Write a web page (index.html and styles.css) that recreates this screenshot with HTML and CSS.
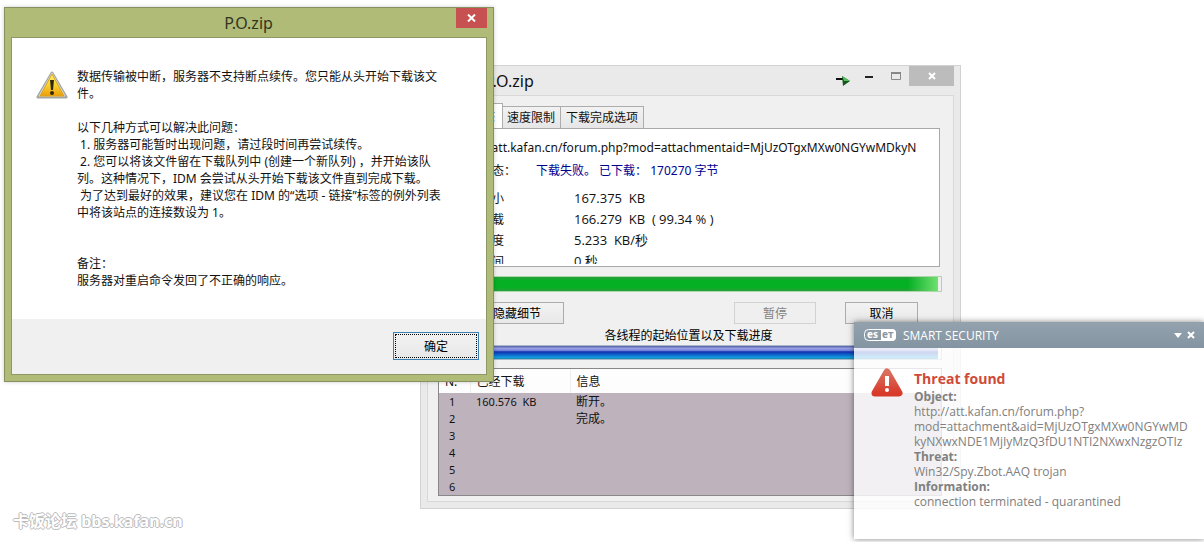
FILE: index.html
```html
<!DOCTYPE html>
<html lang="zh-CN">
<head>
  <meta charset="UTF-8" />
  <meta name="viewport" content="width=device-width, initial-scale=1.0"/>
  <title>P.O.zip</title>
  <link rel="stylesheet" href="styles.css">
</head>
<body>

  <main class="desktop">

    <!-- Download window -->
    <section class="window">
      <header class="window-bar">
        <h1>P.O.zip</h1>
        <div class="window-controls">
          <svg class="arrow" width="14" height="10" viewBox="0 0 14 10"><path d="M0 2h7v2H0z" fill="#111"/><path d="M6 0l8 5-7 5z" fill="#14561c"/><path d="M6 0l8 5H8z" fill="#4fbf5a"/></svg>
          <button class="control" aria-label="最小化"><svg width="8" height="3"><path d="M0 1h8v2H0z" fill="#222"/></svg></button>
          <button class="control" aria-label="最大化"><svg width="10" height="8"><path d="M.5 1h9v6.500h-9z" fill="none" stroke="#888"/><path d="M0 0h10v2H0z" fill="#888"/></svg></button>
          <button class="control control-close" aria-label="关闭"><svg width="8" height="8" viewBox="0 0 8 8"><path d="M1 1l6 6M7 1L1 7" stroke="#fff" stroke-width="2"/></svg></button>
        </div>
      </header>

      <div class="client">
        <nav class="tabs">
          <button class="tab active">下载状态</button>
          <button class="tab">速度限制</button>
          <button class="tab">下载完成选项</button>
        </nav>

        <div class="panel">
          <p class="url">http://att.kafan.cn/forum.php?mod=attachmentaid=MjUzOTgxMXw0NGYwMDkyN</p>
          <p class="status"><span>状　　态：</span><span class="status-text">下载失败。 已下载： 170270 字节</span></p>
          <dl class="details">
            <dt>文件大小</dt><dd>167.375&nbsp; KB</dd>
            <dt>已经下载</dt><dd>166.279&nbsp; KB&nbsp; ( 99.34 % )</dd>
            <dt>传输速度</dt><dd>5.233&nbsp; KB/秒</dd>
            <dt>剩余时间</dt><dd>0 秒</dd>
          </dl>
        </div>

        <div class="progress"><div class="progress-fill"></div></div>

        <div class="actions">
          <button class="btn btn-details">隐藏细节</button>
          <button class="btn btn-pause" disabled>暂停</button>
          <button class="btn btn-cancel">取消</button>
        </div>

        <p class="caption">各线程的起始位置以及下载进度</p>
        <div class="segments"><div class="segments-fill"></div></div>

        <div class="list">
          <table>
            <thead>
              <tr><th class="col-n">N.</th><th class="col-size">已经下载</th><th>信息</th></tr>
            </thead>
            <tbody>
              <tr><td>1</td><td>160.576&nbsp; KB</td><td>断开。</td></tr>
              <tr><td>2</td><td></td><td>完成。</td></tr>
              <tr><td>3</td><td></td><td></td></tr>
              <tr><td>4</td><td></td><td></td></tr>
              <tr><td>5</td><td></td><td></td></tr>
              <tr><td>6</td><td></td><td></td></tr>
            </tbody>
          </table>
        </div>
      </div>
    </section>

    <!-- Error dialog -->
    <section class="dialog" role="dialog" aria-labelledby="dialog-title">
      <header class="dialog-bar">
        <h2 id="dialog-title">P.O.zip</h2>
        <button class="dialog-close" aria-label="关闭"><svg width="9" height="8" viewBox="0 0 9 8"><path d="M1 .5l7 7M8 .5l-7 7" stroke="#fff" stroke-width="2"/></svg></button>
      </header>
      <div class="dialog-body">
        <div class="dialog-content">
          <svg class="warning" width="32" height="30" viewBox="0 0 32 30">
            <defs>
              <linearGradient id="yellow" x1="0" y1="0" x2="0" y2="1">
                <stop offset="0" stop-color="#fff27a"/>
                <stop offset=".55" stop-color="#f6cf2c"/>
                <stop offset="1" stop-color="#ee9d08"/>
              </linearGradient>
            </defs>
            <path d="M16 3L30 27H2z" fill="#a5a5a0" stroke="#a5a5a0" stroke-width="3" stroke-linejoin="round"/>
            <path d="M16 3L29 26H3z" fill="#ddd" stroke="#ddd" stroke-width="1" stroke-linejoin="round"/>
            <path d="M16 4L28 26H4z" fill="url(#yellow)" stroke="#d9a41a" stroke-width="1" stroke-linejoin="round"/>
            <path d="M14 10h4l-1 10h-2z" fill="#332708"/>
            <circle cx="16" cy="23" r="2" fill="#332708"/>
          </svg>
          <p class="message">数据传输被中断，服务器不支持断点续传。您只能从头开始下载该文
件。

以下几种方式可以解决此问题：
 1. 服务器可能暂时出现问题，请过段时间再尝试续传。
 2. 您可以将该文件留在下载队列中 (创建一个新队列) ，并开始该队
列。这种情况下，IDM 会尝试从头开始下载该文件直到完成下载。
 为了达到最好的效果，建议您在 IDM 的“选项 - 链接”标签的例外列表
中将该站点的连接数设为 1。


备注：
服务器对重启命令发回了不正确的响应。</p>
        </div>
        <footer class="dialog-footer">
          <button class="btn btn-ok">确定</button>
        </footer>
      </div>
    </section>

    <!-- Antivirus notification -->
    <aside class="toast" lang="en">
      <header class="toast-bar">
        <svg class="eset" width="32" height="12" viewBox="0 0 32 12">
          <rect x=".5" y=".5" width="31" height="11" rx="4" fill="none" stroke="#fff"/>
          <path d="M17 0h11a4 4 0 0 1 4 4v4a4 4 0 0 1-4 4H17z" fill="#fff"/>
          <text x="3" y="9" class="eset-left">es</text>
          <text x="18" y="9" class="eset-right">eт</text>
        </svg>
        <span class="toast-name">SMART SECURITY</span>
        <button class="toast-btn" aria-label="Options"><svg width="8" height="5"><path d="M0 0h8L4 5z" fill="#fff"/></svg></button>
        <button class="toast-btn" aria-label="Close"><svg width="8" height="8" viewBox="0 0 8 8"><path d="M1 1l6 6M7 1L1 7" stroke="#fff" stroke-width="2"/></svg></button>
      </header>
      <div class="toast-body">
        <svg class="threat" width="32" height="30" viewBox="0 0 32 30">
          <defs>
            <linearGradient id="red" x1="0" y1="0" x2="0" y2="1">
              <stop offset="0" stop-color="#d9705f"/>
              <stop offset="1" stop-color="#d83a29"/>
            </linearGradient>
          </defs>
          <path d="M16 4L28 25H4z" fill="url(#red)" stroke="url(#red)" stroke-width="7" stroke-linejoin="round"/>
          <path d="M14 8h4v10h-4z" fill="#fff"/>
          <circle cx="16" cy="22" r="2" fill="#fff"/>
        </svg>
        <div class="toast-text">
          <h3>Threat found</h3>
          <dl>
            <dt>Object:</dt>
            <dd>http://att.kafan.cn/forum.php?<br>mod=attachment&amp;aid=MjUzOTgxMXw0NGYwMD<br>kyNXwxNDE1MjIyMzQ3fDU1NTI2NXwxNzgzOTIz</dd>
            <dt>Threat:</dt>
            <dd>Win32/Spy.Zbot.AAQ trojan</dd>
            <dt>Information:</dt>
            <dd>connection terminated - quarantined</dd>
          </dl>
        </div>
      </div>
    </aside>

    <div class="watermark">卡饭论坛 bbs.kafan.cn</div>

  </main>

</body>
</html>
```

FILE: styles.css
```css
* { box-sizing: border-box; }
body { margin: 0; background: #fff; color: #111; font: 12px/17px "Noto Sans", "Noto Sans CJK SC", sans-serif; }
h1, h2, h3, p, dl, dd { margin: 0; font-weight: normal; }
button { font: inherit; color: inherit; padding: 0; border: none; background: none; }
svg { display: block; }
.desktop { position: relative; min-height: 100vh; overflow: hidden; }

/* Download window */
.window { position: absolute; left: 420px; top: 65px; width: 541px; padding: 0 6px 6px; background: #eaeaea; border: 1px solid #d2d2d2; }
.window-bar { display: flex; height: 29px; }
.window-bar h1 { flex: 1; padding-left: 58px; font-size: 16px; line-height: 30px; }
.window-controls { display: flex; align-items: flex-start; }
.arrow { margin: 10px 5px 0 0; }
.control { display: flex; justify-content: center; align-items: center; width: 27px; height: 20px; }
.control-close { width: 45px; background: #bcbcbc; }
.client { padding: 9px 11px 5px 10px; background: #f0f0f0; border: 1px solid #d8d8d8; }
.tabs { display: flex; align-items: flex-end; height: 23px; }
.tab { height: 22px; padding: 0 5px; border: 1px solid #acacac; border-bottom: none; border-left: none; background: linear-gradient(#f2f2f2, #e6e6e6); }
.tab.active { height: 25px; padding: 0 7px 0 8px; background: #fff; border-left: 1px solid #acacac; }
.tab:nth-child(2) { padding: 0 5px 0 4px; }
.panel { width: 502px; height: 139px; padding: 10px 12px 3px; background: #fff; border: 1px solid #a8a8a8; overflow: hidden; }
.url { padding-left: 5px; overflow: hidden; white-space: nowrap; }
.status { display: flex; padding: 6px 5px 0; }
.status span:first-child { width: 80px; }
.status-text { color: #000090; }
.details { display: grid; grid-template-columns: 118px 1fr; height: 76px; margin-top: 9px; padding-left: 5px; line-height: 21px; overflow: hidden; }
.details dd { font-family: "Open Sans", "Noto Sans CJK SC", sans-serif; font-size: 13px; }
.progress { height: 16px; margin-top: 9px; padding-right: 3px; background: #eee; border: 1px solid #a9d8a9; }
.progress-fill { height: 14px; background: linear-gradient(90deg, transparent 94%, #70e070), linear-gradient(#2a9e3c, #06b025 25%, #06b025 75%, #2a9e3c); }
.btn { height: 22px; border: 1px solid #acacac; background: linear-gradient(#f2f2f2, #e8e8e8); color: #000; }
.btn:disabled { color: #838383; border-color: #d2d2d2; background: #efefef; }
.actions { display: flex; margin-top: 10px; }
.btn-details { width: 94px; margin-left: 32px; }
.btn-pause { width: 82px; margin-left: auto; }
.btn-cancel { width: 73px; margin: 0 24px 0 29px; }
.caption { margin-top: 3px; padding-right: 3px; text-align: center; color: #000; }
.segments { margin-top: 1px; padding-right: 3px; border: 1px solid #a8b8cc; }
.segments-fill { height: 13px; background: linear-gradient(#5560a0, #98a0e8 20%, #7080d8 35%, #1030b0 45%, #1060c8 65%, #10a0e0 90%, #2080a0); }
.list { margin-top: 8px; background: #beb3bd; border: 1px solid #888; }
.list table { width: 100%; border-collapse: collapse; table-layout: fixed; }
.list th { height: 24px; padding: 0 6px; background: #fdfdfd; border-right: 1px solid #eee; font-weight: normal; text-align: left; }
.list td { height: 17px; padding: 0 6px; font-size: 12px; }
.list td:first-child { padding-left: 10px; font-size: 11px; }
.list td:nth-child(2) { font-size: 11px; }
.list .col-n { width: 31px; }
.list .col-size { width: 100px; }

/* Error dialog */
.dialog { position: absolute; left: 4px; top: 7px; width: 490px; padding: 0 6px 6px; background: #afbb77; border: 1px solid #879160; box-shadow: 0 0 4px rgba(0, 0, 0, .2); }
.dialog-bar { display: flex; height: 29px; }
.dialog-bar h2 { flex: 1; padding-left: 30px; color: #32351f; font-size: 16px; line-height: 30px; text-align: center; }
.dialog-close { display: flex; justify-content: center; align-items: center; width: 31px; height: 20px; background: #c75050; }
.dialog-body { background: #fff; border: 1px solid #8d9865; }
.dialog-content { display: flex; gap: 9px; padding: 30px 24px; }
.warning { flex: none; margin-top: 2px; }
.message { white-space: pre; }
.dialog-footer { display: flex; justify-content: flex-end; padding: 13px 7px 14px; background: #f0f0f0; }
.btn-ok { width: 86px; height: 28px; border-color: #3c7fb1; outline: 1px dotted #000; outline-offset: -3px; }

/* Antivirus notification */
.toast { position: absolute; right: 0; bottom: 3px; width: 350px; background: rgba(255, 255, 255, .8); box-shadow: 0 0 6px rgba(0, 0, 0, .5); color: #808080; font-family: "Open Sans", sans-serif; }
.toast-bar { display: flex; align-items: center; gap: 7px; height: 26px; padding: 0 9px 0 10px; background: linear-gradient(#94a2ae, #8494a2); color: #fff; }
.eset-left, .eset-right { font: bold 10px "Open Sans", sans-serif; fill: #fff; }
.eset-right { fill: #8797a4; }
.toast-name { flex: 1; font-size: 12px; }
.toast-btn { width: 8px; margin-left: -2px; }
.toast-body { display: flex; gap: 11px; padding: 20px 17px 30px; }
.threat { flex: none; }
.toast-text h3 { color: #cf4a37; font-size: 14px; font-weight: bold; line-height: 21px; }
.toast-text dl { font-size: 12px; line-height: 15px; }
.toast-text dt { font-weight: bold; }

.watermark { position: absolute; left: 13px; bottom: 11px; color: #fff; font: bold 16px/20px "Noto Sans", "Noto Sans CJK SC", sans-serif; text-shadow: 1px 0 #bbb, -1px 0 #bbb, 0 1px #bbb, 0 -1px #bbb; }
```
